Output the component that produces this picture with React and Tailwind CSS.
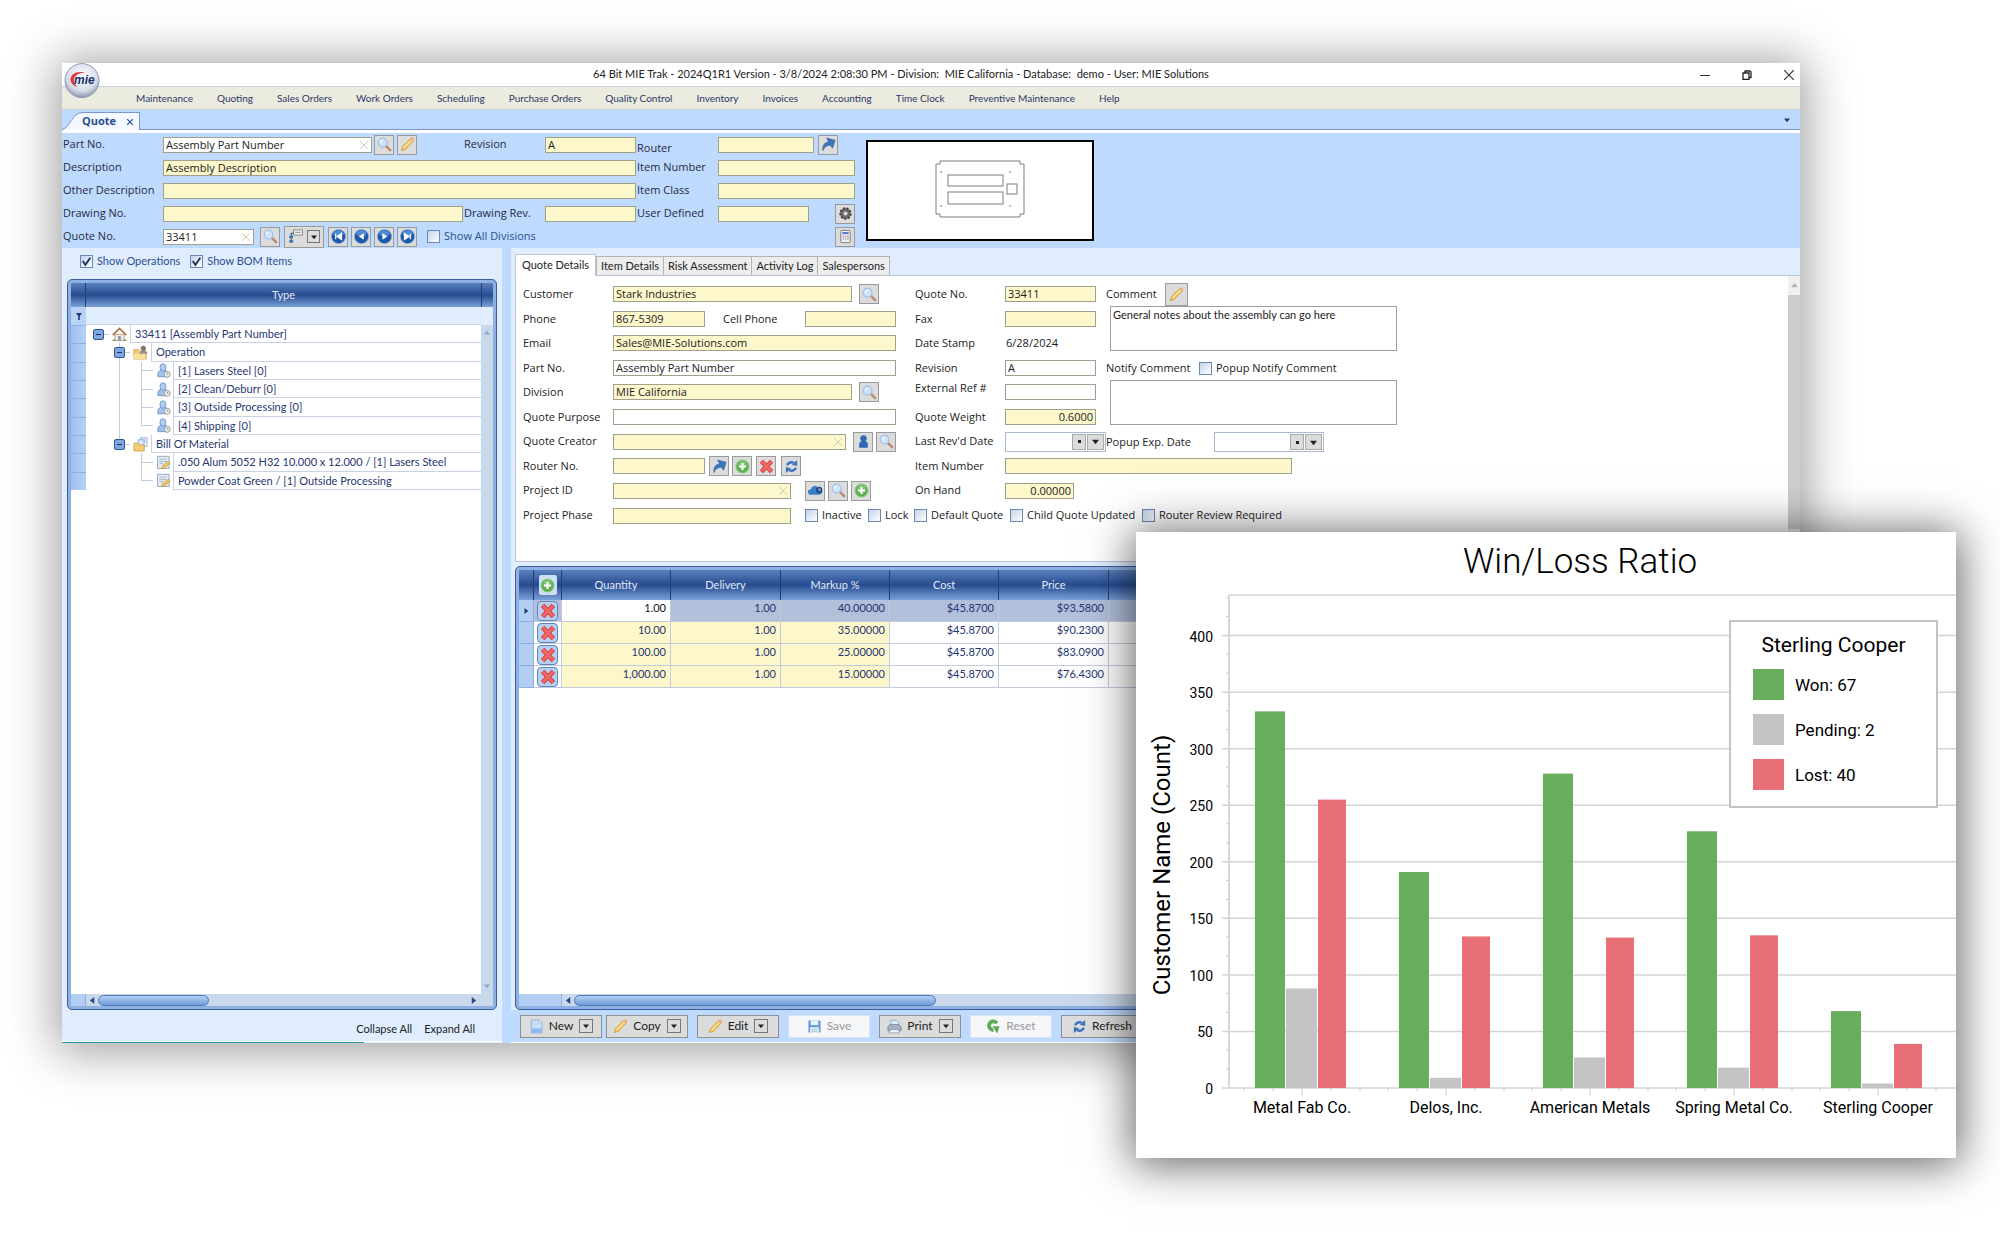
import React, { useState } from "react";
import clsx from "clsx";

const menuItems = [
  "Maintenance",
  "Quoting",
  "Sales Orders",
  "Work Orders",
  "Scheduling",
  "Purchase Orders",
  "Quality Control",
  "Inventory",
  "Invoices",
  "Accounting",
  "Time Clock",
  "Preventive Maintenance",
  "Help",
];

const detailTabs = ["Quote Details", "Item Details", "Risk Assessment", "Activity Log", "Salespersons"];

const treeRows = [
  { level: 1, label: "33411 [Assembly Part Number]", icon: "house" },
  { level: 2, label: "Operation", icon: "folderUser" },
  { level: 3, label: "[1] Lasers Steel [0]", icon: "operation", trunk: true },
  { level: 3, label: "[2] Clean/Deburr [0]", icon: "operation", trunk: true },
  { level: 3, label: "[3] Outside Processing [0]", icon: "operation", trunk: true },
  { level: 3, label: "[4] Shipping [0]", icon: "operation", trunk: true, last: true },
  { level: 2, label: "Bill Of Material", icon: "folderDocs", last: true },
  { level: 3, label: ".050 Alum 5052 H32 10.000 x 12.000 / [1] Lasers Steel", icon: "material" },
  { level: 3, label: "Powder Coat Green / [1] Outside Processing", icon: "material", last: true },
];

const quantities = [
  { quantity: "1.00", delivery: "1.00", markup: "40.00000", cost: "$45.8700", price: "$93.5800" },
  { quantity: "10.00", delivery: "1.00", markup: "35.00000", cost: "$45.8700", price: "$90.2300" },
  { quantity: "100.00", delivery: "1.00", markup: "25.00000", cost: "$45.8700", price: "$83.0900" },
  { quantity: "1,000.00", delivery: "1.00", markup: "15.00000", cost: "$45.8700", price: "$76.4300" },
];

const chartData = [
  { name: "Metal Fab Co.", won: 333, pending: 88, lost: 255 },
  { name: "Delos, Inc.", won: 191, pending: 9, lost: 134 },
  { name: "American Metals", won: 278, pending: 27, lost: 133 },
  { name: "Spring Metal Co.", won: 227, pending: 18, lost: 135 },
  { name: "Sterling Cooper", won: 68, pending: 4, lost: 39 },
];

const legend = [
  { label: "Won: 67", color: "bg-[#69ae5d]" },
  { label: "Pending: 2", color: "bg-[#c3c4c4]" },
  { label: "Lost: 40", color: "bg-[#e76f75]" },
];

// Icons
const shapes = {
  search: (
    <>
      <path d="M9.5 9.5 14 14" stroke="#b98a72" strokeWidth="2.6" strokeLinecap="round" />
      <circle cx="6" cy="6" r="4.6" fill="#cfe4fb" stroke="#a9c4ea" strokeWidth="1.6" />
      <path d="M3.6 6a2.6 2.6 0 0 1 2.6-2.6" stroke="#fff" strokeWidth="1.2" />
    </>
  ),
  pencil: (
    <>
      <path d="M1.5 14.5 2.6 10.4 10.8 2a2 2 0 0 1 2.9 2.8L5.6 13.2Z" fill="#f6c65e" stroke="#c99438" strokeWidth="0.8" />
      <path d="m4 11.8 8-8.2" stroke="#fbe3a2" strokeWidth="1.4" />
      <path d="m10.8 2 2.9 2.8 1-1.2a1.7 1.7 0 0 0-2.6-2.6Z" fill="#e9b48a" />
    </>
  ),
  jump: <path d="M2 14.5C1.5 8.5 4 5.5 8.2 5.3L6 1 15 3.4 12.4 12 9.8 8.8C6 9 4 10.5 2 14.5Z" fill="#3f75bd" stroke="#2d5a9c" strokeWidth="0.6" />,
  add: (
    <>
      <circle cx="8" cy="8" r="7" fill="#5fb052" stroke="#8fce86" strokeWidth="1" />
      <circle cx="8" cy="6" r="4.4" fill="#8bcb7f" opacity="0.7" />
      <path d="M8 4.2v7.6M4.2 8h7.6" stroke="#fff" strokeWidth="2.2" />
    </>
  ),
  remove: (
    <>
      <path d="M2.6 2.4 13.4 13.6M13.4 2.4 2.6 13.6" stroke="#d6373c" strokeWidth="4.8" />
      <path d="M3 2.8 13 13.2M13 2.8 3 13.2" stroke="#f26a66" strokeWidth="3" />
    </>
  ),
  refresh: (
    <>
      <path d="M3.4 6.6C4.4 4 7.4 2.6 10.4 4" stroke="#3a70bd" strokeWidth="2.6" />
      <path d="M14 1v6.4L8.4 6Z" fill="#3a70bd" />
      <path d="M12.6 9.4c-1 2.6-4 4-7 2.6" stroke="#3a70bd" strokeWidth="2.6" />
      <path d="M2 15V8.6L7.6 10Z" fill="#3a70bd" />
    </>
  ),
  user: (
    <>
      <circle cx="8" cy="4.6" r="3.4" fill="#2f68b5" />
      <path d="M3.4 14.6V11C3.4 8.6 5.4 7.2 8 7.2s4.6 1.4 4.6 3.8v3.6Z" fill="#2f68b5" />
    </>
  ),
  cloud: (
    <>
      <path d="M3 12.6a3 3 0 0 1 0-6A4.4 4.4 0 0 1 11 5a3.9 3.9 0 0 1 1.4 7.6Z" fill="#3c7fc9" />
      <path d="M9 3.5h5v5" fill="#a9c9ec" />
      <circle cx="12" cy="7.5" r="2.6" fill="none" stroke="#1c2f55" strokeWidth="1.2" />
    </>
  ),
  gear: (
    <>
      <circle cx="8" cy="8" r="5.6" fill="#6a6a6a" stroke="#444" strokeWidth="2" strokeDasharray="2.4 1.4" />
      <circle cx="8" cy="8" r="2.2" fill="#dcdcdc" />
    </>
  ),
  calculator: (
    <>
      <rect x="3" y="1.5" width="10" height="13" rx="1" fill="#f2f2f2" stroke="#777" />
      <path d="M4.6 4.4h6.8" stroke="#5c83c7" strokeWidth="2.4" />
      <path d="M5 8h1.6M7.4 8H9M9.8 8h1.6M5 10.6h1.6M7.4 10.6H9M9.8 10.6h1.6" stroke="#999" strokeWidth="1.4" />
    </>
  ),
  branch: (
    <>
      <rect x="6" y="1" width="9.4" height="5.4" fill="#f4f4f4" stroke="#777" strokeWidth="0.9" />
      <path d="M8 3.6h5.6" stroke="#666" strokeWidth="1.2" strokeDasharray="1.2 0.8" />
      <path d="M3.4 15V4.6H6" stroke="#2f5f9f" strokeWidth="1.2" />
      <path d="M1.4 8.6h4M1.4 13h4" stroke="#2f77b5" strokeWidth="2.6" />
    </>
  ),
  doc: (
    <>
      <path d="M2.5 1h8l3.4 3.4V15H2.5Z" fill="#c9def8" stroke="#86ace0" strokeWidth="0.9" />
      <path d="M3 10h10.4v4.6H3Z" fill="#8db9ef" />
      <path d="M10.5 1v3.4h3.4Z" fill="#fff" stroke="#86ace0" strokeWidth="0.6" />
    </>
  ),
  floppy: (
    <>
      <rect x="1.5" y="1.5" width="13" height="13" rx="1" fill="#6b9bd4" />
      <rect x="4" y="1.5" width="8" height="5" fill="#e8f1fb" />
      <rect x="3.4" y="9" width="9.2" height="5.5" fill="#fff" />
      <path d="M4.6 11h6.8M4.6 13h6.8" stroke="#7ea6d8" strokeWidth="0.9" />
    </>
  ),
  printer: (
    <>
      <path d="M4.4 1.4h6l2 2V8H4.4Z" fill="#dcebfb" stroke="#7d9cc4" strokeWidth="0.8" />
      <path d="M1 8.4 3.2 6h9.6L15 8.4v4.2H1Z" fill="#a6b4c6" stroke="#66788f" strokeWidth="0.8" />
      <path d="M3.4 11.4h9.2l1 3.4H2.4Z" fill="#f5f8fc" stroke="#7d8ea6" strokeWidth="0.8" />
    </>
  ),
  reset: (
    <>
      <path d="M11.6 4.6A4.6 4.6 0 1 0 8 11.8" stroke="#5aaa58" strokeWidth="4" />
      <path d="M7 7.6h7.4L12 15.4Z" fill="#5aaa58" />
    </>
  ),
  house: (
    <>
      <path d="M3 8h10v6.6H3Z" fill="#f3ead9" stroke="#a48c74" strokeWidth="0.8" />
      <path d="M.8 8.6 8 1.6l7.2 7" stroke="#a9714d" strokeWidth="1.8" />
      <path d="M6.6 9.6h2.8v5H6.6Z" fill="#7c98c0" />
      <path d="M.6 13.2h3v1.6h-3ZM12.4 13.2h3v1.6h-3Z" fill="#6fa84f" />
    </>
  ),
  folderUser: (
    <>
      <path d="M1 5h5l1.4 1.8H14V15H1Z" fill="#f3cd72" stroke="#c79a40" strokeWidth="0.8" />
      <circle cx="11" cy="3.6" r="2.8" fill="#8a7468" />
      <path d="M6.6 9.4c0-2.4 1.8-3.4 4.4-3.4s4.4 1 4.4 3.4Z" fill="#8f8f98" />
      <path d="M1 9.4h12V15H1Z" fill="#fbe09a" />
    </>
  ),
  folderDocs: (
    <>
      <path d="M8 .8h7v9.4H8Z" fill="#f2f7fd" stroke="#7fa0cc" strokeWidth="0.8" />
      <path d="M9.4 3.2h4.2M9.4 5h4.2" stroke="#86a9d6" strokeWidth="0.8" />
      <path d="M5.4 3h6.4v8H5.4Z" fill="#dbe8f7" stroke="#7fa0cc" strokeWidth="0.8" />
      <path d="M1 6.4h3.6L6 8.4h6V15H1Z" fill="#f3cf74" stroke="#c79a40" strokeWidth="0.8" />
    </>
  ),
  operation: (
    <>
      <path d="M2 14.6v-3C2 9 4.2 7.4 7.4 7.4s5.2 1.6 5.2 4.2v3Z" fill="#a3c2eb" stroke="#6c90c6" strokeWidth="0.9" />
      <ellipse cx="7.4" cy="4.8" rx="3.2" ry="4" fill="#b4cef1" stroke="#6c90c6" strokeWidth="0.9" />
      <circle cx="12" cy="12" r="3.2" fill="#eef0e4" stroke="#8c9298" strokeWidth="0.9" />
      <path d="M12 10.4V12h1.4" stroke="#777" strokeWidth="0.8" />
    </>
  ),
  material: (
    <>
      <path d="M1.6 1.4H14v13H1.6Z" fill="#e3ebf4" stroke="#8d9fb6" strokeWidth="0.9" />
      <path d="M3.6 4.4h8M3.6 6.8h8M3.6 9.2h4" stroke="#9db0c9" strokeWidth="0.9" />
      <path d="m6 14.6.8-3 6.4-5 1.8 2-6.2 5.4Z" fill="#f5ca5c" stroke="#b98d33" strokeWidth="0.7" />
    </>
  ),
  first: <path d="M5 5v6M11.2 4.8 6.6 8l4.6 3.2Z" fill="#fff" stroke="#fff" strokeWidth="1.3" />,
  previous: <path d="M10.4 4.6 5.2 8l5.2 3.4Z" fill="#fff" />,
  next: <path d="M5.8 4.6 11 8l-5.2 3.4Z" fill="#fff" />,
  final: <path d="M11 5v6M4.8 4.8 9.4 8l-4.6 3.2Z" fill="#fff" stroke="#fff" strokeWidth="1.3" />,
};

const Icon = ({ name, className = "size-4" }) => (
  <svg viewBox="0 0 16 16" fill="none" className={clsx("shrink-0", className)} aria-hidden="true">
    {["first", "previous", "next", "final"].includes(name) && (
      <>
        <circle cx="8" cy="8" r="7.6" fill="#1e58a6" stroke="#8fb3dd" strokeWidth="0.8" />
        <ellipse cx="8" cy="4.8" rx="5.4" ry="3.4" fill="#4f8ed4" />
      </>
    )}
    {shapes[name]}
  </svg>
);

const Caret = ({ dir = "down", className = "size-[7px] text-[#222]" }) => (
  <svg viewBox="0 0 8 8" className={clsx("shrink-0", className)} fill="currentColor" aria-hidden="true">
    {dir === "down" && <path d="M0 2h8L4 7Z" />}
    {dir === "up" && <path d="M0 6h8L4 1Z" />}
    {dir === "left" && <path d="M6 0v8L1 4Z" />}
    {dir === "right" && <path d="M2 0v8l5-4Z" />}
  </svg>
);

// Form controls
const IconButton = ({ icon, label, className = "" }) => (
  <button
    type="button"
    aria-label={label}
    className={clsx("flex size-5 shrink-0 items-center justify-center border border-[#9a9a9a] bg-[#dcdcdc]", className)}
  >
    <Icon name={icon} className="size-[15px]" />
  </button>
);

const Field = ({ id, value = "", white, clearable, right, className = "", label }) => (
  <span className={clsx("relative flex shrink-0", className)}>
    <input
      id={id}
      aria-label={label}
      defaultValue={value}
      className={clsx(
        "h-4 w-full min-w-0 border border-[#a0a08c] px-[2px] text-[11px] leading-4 text-[#222] outline-none",
        white ? "bg-white" : "bg-[#fdf8cc]",
        right && "text-right"
      )}
    />
    {clearable && (
      <svg viewBox="0 0 8 8" className="absolute right-1 top-1 size-2" stroke="#cfcbb8" aria-hidden="true">
        <path d="m0 0 8 8M8 0 0 8" />
      </svg>
    )}
  </span>
);

const CheckBox = ({ label, checked, className = "" }) => (
  <label className={clsx("flex shrink-0 items-center gap-1 whitespace-nowrap", className)}>
    <span className="relative flex">
      <input
        type="checkbox"
        defaultChecked={checked}
        className="peer size-[13px] appearance-none border border-[#6b87b4] bg-linear-to-br from-[#c3d3ea] to-white"
      />
      <svg
        viewBox="0 0 12 12"
        fill="none"
        stroke="#24355c"
        strokeWidth="1.8"
        className="pointer-events-none absolute left-0 top-0 hidden size-[13px] peer-checked:block"
        aria-hidden="true"
      >
        <path d="M2.5 5.5 5 9l4.5-6.5" />
      </svg>
    </span>
    {label}
  </label>
);

const Row = ({ id, label, top, children }) => (
  <div className="flex items-center">
    <label htmlFor={id} className={clsx("w-[90px] shrink-0 whitespace-nowrap", top && "self-start")}>
      {label}
    </label>
    {children}
  </div>
);

const HeadRow = ({ id, label, width, low, children }) => (
  <div className="flex h-[23px] items-center">
    <label htmlFor={id} className={clsx("shrink-0 whitespace-nowrap", width, low && "self-end")}>
      {label}
    </label>
    {children}
  </div>
);

const DateField = ({ id, className }) => (
  <span className={clsx("flex h-5 shrink-0 items-stretch gap-px border border-[#a9b9d6] bg-white p-px", className)}>
    <input id={id} defaultValue="" className="w-0 min-w-0 flex-1 text-[11px] outline-none" />
    <button type="button" aria-label="Pick a day" className="flex w-[14px] items-center justify-center border border-[#aaa] bg-[#dcdcdc]">
      <span className="size-[3px] bg-[#222]" />
    </button>
    <button type="button" aria-label="Open calendar" className="flex w-[17px] items-center justify-center border border-[#aaa] bg-[#dcdcdc]">
      <Caret />
    </button>
  </span>
);

const Logo = () => (
  <svg viewBox="0 0 36 36" className="absolute left-[2px] top-0 size-9" aria-label="mie">
    <defs>
      <radialGradient id="disc" cx="50%" cy="35%" r="65%">
        <stop offset="0" stopColor="#fdfeff" />
        <stop offset="0.7" stopColor="#d5dce8" />
        <stop offset="1" stopColor="#8b97ae" />
      </radialGradient>
    </defs>
    <circle cx="18" cy="17.6" r="17" fill="url(#disc)" stroke="#8f9bb2" strokeWidth="1" />
    <path d="M21 9.4C12 7.8 6.6 11.6 6.6 16.4c0 3.6 2.6 6.2 6.6 7.4-2.4-1.8-3.6-4-3.4-7 .2-4 4.4-7 11.2-7.4Z" fill="#e0303a" />
    <text x="10" y="21" fontFamily="Liberation Sans, sans-serif" fontWeight="bold" fontStyle="italic" fontSize="12" fill="#1d2f66">
      mie
    </text>
  </svg>
);

const TitleBar = () => (
  <header className="relative font-[Lato,sans-serif]">
    <div className="flex h-[23px] items-center bg-white">
      <span className="w-[120px] shrink-0" />
      <h1 className="flex-1 whitespace-nowrap text-center text-[11px] text-[#222]">
        64 Bit MIE Trak - 2024Q1R1 Version - 3/8/2024 2:08:30 PM - Division:&nbsp; MIE California - Database:&nbsp; demo - User: MIE Solutions
      </h1>
      <div className="mr-[5px] flex w-[175px] shrink-0 items-center justify-end gap-[30px]">
        <button type="button" aria-label="Minimize" className="p-px">
          <svg viewBox="0 0 10 10" className="size-[10px]" stroke="#333"><path d="M0 5.5h10" /></svg>
        </button>
        <button type="button" aria-label="Restore" className="p-px">
          <svg viewBox="0 0 10 10" className="size-[10px]" stroke="#222" fill="none" strokeWidth="1.3">
            <path d="M1 3h6v6.4H1ZM3 3V1h4.4A1.6 1.6 0 0 1 9 2.6V7.5H7" />
          </svg>
        </button>
        <button type="button" aria-label="Close" className="p-px">
          <svg viewBox="0 0 10 10" className="size-[10px]" stroke="#333" strokeWidth="1.2"><path d="m0 0 10 10M10 0 0 10" /></svg>
        </button>
      </div>
    </div>
    <nav className="flex h-6 items-center gap-6 border-y border-[#c3d0e4] bg-[#ecebe0] pl-[74px] pt-px text-[10px] text-[#2b3767]">
      {menuItems.map((item) => (
        <button key={item} type="button" className="whitespace-nowrap">
          {item}
        </button>
      ))}
    </nav>
    <Logo />
  </header>
);

const DocumentTabs = () => (
  <div className="flex h-[23px] items-end justify-between border-b-[3px] border-white bg-[#bfdaff]">
    <div className="flex h-full flex-1 items-end border-b border-[#7a95cf]">
      <svg viewBox="0 0 20 18" className="-mb-px h-[18px] w-5" aria-hidden="true">
        <path d="M0 18C8 16 10 1 20 1v17Z" fill="#f4f9ff" />
        <path d="M0 17.5C8 16 10 1 20 .5" fill="none" stroke="#7a95cf" />
      </svg>
      <div className="-mb-px flex h-[18px] items-center gap-[11px] border-r border-t border-[#7a95cf] bg-[#f4f9ff] pr-[6px] text-[#2b4c8f]">
        <button type="button" className="text-[11px] font-bold">Quote</button>
        <button type="button" aria-label="Close tab">
          <svg viewBox="0 0 6 6" className="size-[6px]" stroke="#2b4c8f" strokeWidth="1.2"><path d="m0 0 6 6M6 0 0 6" /></svg>
        </button>
      </div>
      <button type="button" aria-label="Tab list" className="mb-[6px] ml-auto mr-[10px]">
        <Caret className="size-[6px] text-[#1f3a73]" />
      </button>
    </div>
  </div>
);

const PartPreview = () => (
  <div className="ml-[11px] mt-[7px] flex h-[101px] w-[228px] shrink-0 items-center justify-center border-2 border-black bg-white">
    <svg viewBox="0 0 90 58" className="-mt-1 h-[58px] w-[90px]" fill="none" stroke="#7d7d7d" aria-label="Part drawing">
      <path d="M5 1h80v3h4v50h-4v3H5v-3H1V4h4Z" />
      <rect x="13" y="15" width="55" height="11" />
      <rect x="13" y="32" width="55" height="12" />
      <rect x="72" y="24" width="10" height="10" />
      <path d="M5 12h2M74 12h2M5 46h2M74 46h2" />
    </svg>
  </div>
);

const PartHeader = () => (
  <section className="flex bg-[#bfdaff] pl-px text-[11px] text-[#1f2a3f]">
    <div className="w-[573px] shrink-0">
      <HeadRow id="part" label="Part No." width="w-[100px]">
        <Field id="part" value="Assembly Part Number" white clearable className="w-[209px]" />
        <IconButton icon="search" label="Find part" className="ml-[2px]" />
        <IconButton icon="pencil" label="Edit part" className="ml-[3px]" />
        <label htmlFor="rev" className="ml-[47px] w-[81px]">Revision</label>
        <Field id="rev" value="A" className="w-[91px]" />
      </HeadRow>
      <HeadRow id="desc" label="Description" width="w-[100px]">
        <Field id="desc" value="Assembly Description" className="w-[473px]" />
      </HeadRow>
      <HeadRow id="other" label="Other Description" width="w-[100px]">
        <Field id="other" className="w-[473px]" />
      </HeadRow>
      <HeadRow id="drawing" label="Drawing No." width="w-[100px]">
        <Field id="drawing" className="w-[300px]" />
        <label htmlFor="drawingRev" className="ml-px w-[81px]">Drawing Rev.</label>
        <Field id="drawingRev" className="w-[91px]" />
      </HeadRow>
      <HeadRow id="quote" label="Quote No." width="w-[100px]">
        <Field id="quote" value="33411" white clearable className="w-[91px]" />
        <IconButton icon="search" label="Find quote" className="ml-[6px]" />
        <div className="ml-1 flex h-[22px] w-10 items-center justify-between border border-[#9a9a9a] bg-[#dcdcdc] px-[3px]">
          <button type="button" aria-label="Quote tree"><Icon name="branch" className="size-[15px]" /></button>
          <button type="button" aria-label="More" className="flex size-[13px] items-center justify-center border border-[#777]">
            <Caret className="size-[6px] text-[#222]" />
          </button>
        </div>
        <div className="ml-1 flex gap-[3px]">
          <IconButton icon="first" label="First" />
          <IconButton icon="previous" label="Previous" />
          <IconButton icon="next" label="Next" />
          <IconButton icon="final" label="Last" />
        </div>
        <CheckBox label="Show All Divisions" className="ml-[10px] text-[#2c4f8f]" />
      </HeadRow>
    </div>
    <div className="ml-px w-[218px] shrink-0">
      <HeadRow id="router" label="Router" width="w-[81px]" low>
        <Field id="router" className="w-24" />
        <IconButton icon="jump" label="Open router" className="ml-1" />
      </HeadRow>
      <HeadRow id="itemNo" label="Item Number" width="w-[81px]">
        <Field id="itemNo" className="w-[137px]" />
      </HeadRow>
      <HeadRow id="itemClass" label="Item Class" width="w-[81px]">
        <Field id="itemClass" className="w-[137px]" />
      </HeadRow>
      <HeadRow id="userDef" label="User Defined" width="w-[81px]">
        <Field id="userDef" className="w-[91px]" />
        <IconButton icon="gear" label="Settings" className="ml-auto" />
      </HeadRow>
      <div className="flex h-[23px] items-center justify-end">
        <IconButton icon="calculator" label="Calculator" />
      </div>
    </div>
    <PartPreview />
  </section>
);

const Collapse = () => (
  <button
    type="button"
    aria-label="Collapse"
    className="flex size-[11px] shrink-0 items-center justify-center rounded-[2px] border border-[#2f5596] bg-[#7fa6df]"
  >
    <span className="h-px w-[5px] bg-[#16305f]" />
  </button>
);

const TreeRow = ({ row }) => (
  <li className="flex flex-1 items-center">
    {row.level === 1 && (
      <>
        <span className="w-[7px]" />
        <Collapse />
        <span className="h-px w-[5px] bg-[#c3cde0]" />
        <Icon name={row.icon} className="ml-[3px] mr-[3px] size-[15px]" />
      </>
    )}
    {row.level === 2 && (
      <>
        <span className="w-7" />
        <span className="flex flex-col items-center self-stretch">
          <span className="w-px flex-1 bg-[#c3cde0]" />
          <Collapse />
          <span className={clsx("w-px flex-1", !row.last && "bg-[#c3cde0]")} />
        </span>
        <span className="h-px w-[5px] bg-[#c3cde0]" />
        <Icon name={row.icon} className="ml-[3px] mr-[3px] size-[15px]" />
      </>
    )}
    {row.level === 3 && (
      <>
        <span className={clsx("w-[34px] self-stretch border-r", row.trunk ? "border-[#c3cde0]" : "border-transparent")} />
        <span className={clsx("w-[22px] border-r border-[#c3cde0]", row.last ? "h-1/2 self-start" : "self-stretch")} />
        <span className="h-px w-[11px] bg-[#c3cde0]" />
        <Icon name={row.icon} className="ml-[3px] mr-[2px] size-[15px]" />
      </>
    )}
    <span className="flex-1 self-stretch whitespace-nowrap border-b border-l border-[#c9d2e2] pl-1 leading-[17px] text-[#263670]">{row.label}</span>
  </li>
);

const BottomScroll = ({ gutter, thumb, right }) => (
  <div className="flex h-3 items-center bg-[#c9d8ea]">
    <span className={clsx("h-full border-r border-[#8fb0e0] bg-[#b4cdf2]", gutter)} />
    <Caret dir="left" className="ml-[3px] mr-[2px] size-[7px] text-[#274a86]" />
    <span className={clsx("h-[11px] rounded-full border border-[#4f76b5] bg-linear-to-b from-[#b5d0f5] to-[#6f9bd8]", thumb)} />
    {right && <Caret dir="right" className="ml-auto mr-4 size-[7px] text-[#274a86]" />}
  </div>
);

const TreePanel = () => (
  <aside className="flex w-[440px] shrink-0 flex-col bg-[#e0edff] font-[Lato,sans-serif] text-[11px]">
    <div className="flex h-[27px] items-center gap-[10px] pl-[18px] text-[#2c4f8f]">
      <CheckBox label="Show Operations" checked />
      <CheckBox label="Show BOM Items" checked />
    </div>
    <div className="ml-[5px] mr-[5px] mt-1 flex min-h-0 flex-1 flex-col rounded-[5px] border border-[#3d5d9a] bg-[#8fb0e2] p-[3px]">
      <div className="flex h-6 shrink-0 bg-[linear-gradient(#5b82be,#274b8f_50%,#7ba1d8)] text-[#e3ecfa]">
        <span className="w-[15px] border-r border-[#1d3d7c]" />
        <span className="flex flex-1 items-center justify-center">Type</span>
        <span className="w-3 border-l border-[#1d3d7c]" />
      </div>
      <div className="flex min-h-0 flex-1 bg-white">
        <div className="w-[15px] shrink-0">
          <div className="flex h-[18px] items-center justify-center bg-[#b9d2f6] text-[#1f3a73]">
            <svg viewBox="0 0 6 7" className="h-[7px] w-[6px]" fill="currentColor" aria-label="Filter"><path d="M0 0h6L3.8 3v4H2.2V3Z" /></svg>
          </div>
          <div className="flex h-[165px] flex-col">
            {treeRows.map((row) => (
              <span key={row.label} className="flex-1 border-t border-[#8fb0e0] bg-linear-to-r from-[#9dbff0] to-[#b7d0f5]" />
            ))}
          </div>
        </div>
        <div className="min-w-0 flex-1">
          <div className="h-[18px] border-b border-[#c9d2e2] bg-[#e0edff]" />
          <ul className="flex h-[165px] flex-col">
            {treeRows.map((row) => (
              <TreeRow key={row.label} row={row} />
            ))}
          </ul>
        </div>
        <div className="flex w-3 shrink-0 flex-col">
          <span className="h-[18px] bg-[#e0edff]" />
          <span className="flex flex-1 flex-col items-center justify-between bg-[#c9d8ea] py-[5px]">
            <Caret dir="up" className="size-[6px] text-[#8ea6c8]" />
            <Caret className="size-[6px] text-[#8ea6c8]" />
          </span>
        </div>
      </div>
      <BottomScroll gutter="w-[15px]" thumb="w-[111px]" right />
    </div>
    <div className="flex h-[32px] items-center justify-end gap-3 border-b border-white pr-[27px] pt-2 text-[#222]">
      <button type="button">Collapse All</button>
      <button type="button">Expand All</button>
    </div>
    <div className="h-px w-[302px] bg-[#2f93ad]" />
  </aside>
);

const QuoteForm = () => (
  <div className="pl-[7px] pt-[6px]">
    <div className="flex h-[221px]">
      <div className="grid w-[392px] shrink-0 grid-rows-9">
        <Row id="customer" label="Customer">
          <Field id="customer" value="Stark Industries" className="w-[239px]" />
          <IconButton icon="search" label="Find customer" className="ml-[7px]" />
        </Row>
        <Row id="phone" label="Phone">
          <Field id="phone" value="867-5309" className="w-[92px]" />
          <label htmlFor="cell" className="ml-[18px] w-[82px]">Cell Phone</label>
          <Field id="cell" className="w-[91px]" />
        </Row>
        <Row id="email" label="Email">
          <Field id="email" value="Sales@MIE-Solutions.com" className="w-[283px]" />
        </Row>
        <Row id="partNo" label="Part No.">
          <Field id="partNo" value="Assembly Part Number" white className="w-[283px]" />
        </Row>
        <Row id="division" label="Division">
          <Field id="division" value="MIE California" className="w-[239px]" />
          <IconButton icon="search" label="Find division" className="ml-[7px]" />
        </Row>
        <Row id="purpose" label="Quote Purpose">
          <Field id="purpose" white className="w-[283px]" />
        </Row>
        <Row id="creator" label="Quote Creator">
          <Field id="creator" clearable className="w-[233px]" />
          <IconButton icon="user" label="Me" className="ml-[7px]" />
          <IconButton icon="search" label="Find creator" className="ml-[3px]" />
        </Row>
        <Row id="routerNo" label="Router No.">
          <Field id="routerNo" className="w-[92px]" />
          <IconButton icon="jump" label="Open router" className="ml-1" />
          <IconButton icon="add" label="Add router" className="ml-[3px]" />
          <IconButton icon="remove" label="Remove router" className="ml-1" />
          <IconButton icon="refresh" label="Reload router" className="ml-[5px]" />
        </Row>
        <Row id="project" label="Project ID">
          <Field id="project" clearable className="w-[178px]" />
          <IconButton icon="cloud" label="Project files" className="ml-[14px]" />
          <IconButton icon="search" label="Find project" className="ml-[3px]" />
          <IconButton icon="add" label="Add project" className="ml-[3px]" />
        </Row>
      </div>

      <div className="grid w-[191px] shrink-0 grid-rows-9">
        <Row id="quoteNo" label="Quote No.">
          <Field id="quoteNo" value="33411" className="w-[91px]" />
        </Row>
        <Row id="fax" label="Fax">
          <Field id="fax" className="w-[91px]" />
        </Row>
        <div className="flex items-center">
          <span className="w-[91px]">Date Stamp</span>
          <span>6/28/2024</span>
        </div>
        <Row id="revision" label="Revision">
          <Field id="revision" value="A" white className="w-[91px]" />
        </Row>
        <Row id="extRef" label="External Ref #" top>
          <Field id="extRef" white className="w-[91px]" />
        </Row>
        <Row id="weight" label="Quote Weight">
          <Field id="weight" value="0.6000" right className="w-[91px]" />
        </Row>
        <Row id="lastRev" label="Last Rev'd Date">
          <DateField id="lastRev" className="w-[101px]" />
        </Row>
        <Row id="itemNumber" label="Item Number">
          <Field id="itemNumber" className="w-[287px]" />
        </Row>
        <Row id="onHand" label="On Hand">
          <Field id="onHand" value="0.00000" right className="w-[69px]" />
        </Row>
      </div>

      <div className="w-[291px] shrink-0">
        <div className="flex h-6 items-center">
          <label htmlFor="comment" className="w-[59px]">Comment</label>
          <IconButton icon="pencil" label="Edit comment" className="size-[23px]" />
        </div>
        <textarea
          id="comment"
          defaultValue="General notes about the assembly can go here"
          className="ml-1 block h-[45px] w-[287px] resize-none border border-[#a0a0a0] px-[2px] font-[Lato,sans-serif] text-[11px] outline-none"
        />
        <div className="flex h-[29px] items-center pt-[6px]">
          <label htmlFor="notify" className="w-[93px]">Notify Comment</label>
          <CheckBox label="Popup Notify Comment" />
        </div>
        <textarea
          id="notify"
          defaultValue=""
          className="ml-1 block h-[45px] w-[287px] resize-none border border-[#a0a0a0] px-[2px] text-[11px] outline-none"
        />
        <div className="mt-[5px] flex h-6 items-center">
          <label htmlFor="popupDate" className="w-[108px]">Popup Exp. Date</label>
          <DateField id="popupDate" className="w-[110px]" />
        </div>
      </div>
    </div>
    <div className="flex h-[25px] items-center">
      <label htmlFor="phase" className="w-[90px]">Project Phase</label>
      <Field id="phase" className="w-[178px]" />
      <div className="ml-[14px] flex items-center">
        <CheckBox label="Inactive" className="w-[63px]" />
        <CheckBox label="Lock" className="w-[46px]" />
        <CheckBox label="Default Quote" className="w-[96px]" />
        <CheckBox label="Child Quote Updated" className="w-[132px]" />
        <CheckBox label="Router Review Required" />
      </div>
    </div>
  </div>
);

const QuoteTabs = () => {
  const [active, setActive] = useState("Quote Details");

  return (
    <div className="flex items-end pt-[6px] font-[Lato,sans-serif] text-[11px] text-[#222]">
      {detailTabs.map((tab) => (
        <button
          key={tab}
          type="button"
          onClick={() => setActive(tab)}
          className={clsx(
            "whitespace-nowrap border-x border-t",
            active === tab ? "z-10 -mb-px h-[22px] border-[#c0c4cc] bg-white px-[6px]" : "-mr-px h-[19px] border-[#b4b4b4] bg-[#ededed] px-1"
          )}
        >
          {tab}
        </button>
      ))}
    </div>
  );
};

const cell = "h-[22px] border-b border-r border-[#c3cbdd] pr-1 pb-1 text-right";

const QuantityGrid = () => (
  <div className="mt-1 flex min-h-0 flex-1 flex-col overflow-hidden rounded-tl-[5px] rounded-bl-[5px] border border-[#3d5d9a] bg-[#8fb0e2] p-[3px] font-[Lato,sans-serif]">
    <div className="min-h-0 flex-1 bg-white">
      <table className="w-full table-fixed border-separate border-spacing-0 text-[11px] text-[#263670]">
        <colgroup>
          <col className="w-[15px]" />
          <col className="w-7" />
          <col className="w-[109px]" />
          <col className="w-[110px]" />
          <col className="w-[109px]" />
          <col className="w-[109px]" />
          <col className="w-[110px]" />
          <col />
        </colgroup>
        <thead>
          <tr className="h-[30px] bg-[linear-gradient(#5b82be,#274b8f_50%,#7ba1d8)] text-[#e3ecfa]">
            <th className="border-r border-[#1d3d7c]" />
            <th className="border-r border-[#1d3d7c]">
              <button type="button" aria-label="Add quantity" className="mx-auto flex h-5 w-[18px] items-center justify-center rounded-[2px] bg-[#cfe0f5]">
                <Icon name="add" className="size-[15px]" />
              </button>
            </th>
            {["Quantity", "Delivery", "Markup %", "Cost", "Price", ""].map((title) => (
              <th key={title} className="border-r border-[#1d3d7c] font-normal">{title}</th>
            ))}
          </tr>
        </thead>
        <tbody>
          {quantities.map((q, i) => (
            <tr key={q.quantity} className={clsx(i === 0 && "bg-[#b2c0dc]")}>
              <td className="border-b border-r border-[#8fb0e0] bg-[#b4cdf2]">
                {i === 0 && <Caret dir="right" className="mx-auto size-[6px] text-[#1f3a73]" />}
              </td>
              <td className="border-b border-r border-[#c3cbdd]">
                <button
                  type="button"
                  aria-label={`Delete quantity ${q.quantity}`}
                  className="mx-auto flex h-5 w-[21px] items-center justify-center rounded-[4px] border border-[#5d86bf] bg-[#b7d0f0]"
                >
                  <Icon name="remove" className="size-4" />
                </button>
              </td>
              <td className={clsx(cell, i === 0 ? "bg-white text-[#111]" : "bg-[#fdf8cc]")}>{q.quantity}</td>
              <td className={clsx(cell, i > 0 && "bg-[#fdf8cc]")}>{q.delivery}</td>
              <td className={clsx(cell, i > 0 && "bg-[#fdf8cc]")}>{q.markup}</td>
              <td className={cell}>{q.cost}</td>
              <td className={cell}>{q.price}</td>
              <td className={cell} />
            </tr>
          ))}
        </tbody>
      </table>
    </div>
    <BottomScroll gutter="w-[43px]" thumb="w-[362px]" />
  </div>
);

const ToolButton = ({ icon, label, menu, disabled, className = "" }) => (
  <div
    className={clsx(
      "flex h-[23px] w-[82px] shrink-0 items-center justify-center gap-[6px] border",
      disabled ? "border-[#dde3ec] bg-[#f5f7f9] text-[#9a9a9a]" : "border-[#8f8f8f] bg-[#dcdcdc] text-[#222]",
      className
    )}
  >
    <button type="button" disabled={disabled} className="flex items-center gap-[5px]">
      <Icon name={icon} className="size-[15px]" />
      {label}
    </button>
    {menu && (
      <button type="button" aria-label={`${label} options`} className="flex size-[14px] items-center justify-center border border-[#777]">
        <Caret className="size-[6px] text-[#222]" />
      </button>
    )}
  </div>
);

const QuotePanel = () => (
  <section className="flex min-w-0 flex-1 flex-col">
    <div className="flex min-h-0 flex-1 flex-col bg-[#e0edff] pl-1">
      <QuoteTabs />
      <div className="flex h-[287px] shrink-0 border-y border-l border-[#b9c3d6] bg-white text-[11px] text-[#222]">
        <div className="min-w-0 flex-1">
          <QuoteForm />
        </div>
        <div className="flex w-3 flex-col items-center bg-[#f0f0f0]">
          <Caret dir="up" className="my-[6px] size-[7px] text-[#b5b5b5]" />
          <span className="mb-8 w-full flex-1 bg-[#cdcdcd]" />
        </div>
      </div>
      <QuantityGrid />
    </div>
    <div className="flex h-[33px] items-center gap-[9px] overflow-hidden border-b border-white bg-[#bfdaff] pl-[9px] font-[Lato,sans-serif] text-[12px]">
      <ToolButton icon="doc" label="New" menu />
      <ToolButton icon="pencil" label="Copy" menu className="-ml-[5px]" />
      <ToolButton icon="pencil" label="Edit" menu />
      <ToolButton icon="floppy" label="Save" disabled />
      <ToolButton icon="printer" label="Print" menu />
      <ToolButton icon="reset" label="Reset" disabled />
      <ToolButton icon="refresh" label="Refresh" />
    </div>
  </section>
);

// Chart geometry, in the drawing's own units
const baseY = 490;
const perUnit = 1.131;
const axisX = 92;

const WinLossChart = () => (
  <section className="absolute bottom-[75px] right-11 w-[41%] bg-white shadow-[0_3px_42px_4px_rgba(0,0,0,0.6)] font-[Roboto,sans-serif] text-black">
    <h2 className="pl-[68px] pt-2 text-center text-[35px] font-light leading-[44px]">Win/Loss Ratio</h2>
    <svg viewBox="0 0 820 574" className="block w-full" role="img" aria-label="Win/Loss Ratio by customer">
      <g transform="translate(1 14)">
        <path d={`M${axisX} -3V${baseY}`} stroke="#c9cacc" strokeWidth="1.5" />
        <path d={`M${axisX} -3H820`} stroke="#d3d4d6" strokeWidth="1.5" />
        {[0, 50, 100, 150, 200, 250, 300, 350, 400].map((v) => {
          const y = baseY - v * perUnit;
          return (
            <g key={v}>
              <path d={`M${axisX - 7} ${y}H820`} stroke="#d3d4d6" strokeWidth="1.5" />
              <path d={`M${axisX - 3} ${y - 19}h3M${axisX - 3} ${y - 38}h3`} stroke="#c9cacc" />
              <text x={axisX - 16} y={y + 6} textAnchor="end" fontSize="14">{v}</text>
            </g>
          );
        })}
        {chartData.map((d, i) => {
          const mid = 165 + i * 144;
          return (
            <g key={d.name}>
              <rect x={mid - 47} y={baseY - d.won * perUnit} width="30" height={d.won * perUnit} fill="#69ae5d" />
              <rect x={mid - 16} y={baseY - d.pending * perUnit} width="31" height={d.pending * perUnit} fill="#c3c4c4" />
              <rect x={mid + 16} y={baseY - d.lost * perUnit} width="28" height={d.lost * perUnit} fill="#e76f75" />
              <path d={`M${mid} ${baseY}v7M${mid - 58} ${baseY}v3M${mid + 58} ${baseY}v3M${mid - 29} ${baseY}v3M${mid + 29} ${baseY}v3`} stroke="#c9cacc" />
              <text x={mid} y={baseY + 25} textAnchor="middle" fontSize="16">{d.name}</text>
            </g>
          );
        })}
        <text transform="translate(33 267) rotate(-90)" textAnchor="middle" fontSize="24">Customer Name (Count)</text>
      </g>
    </svg>
    <div className="absolute right-[18px] top-[88px] w-[209px] border-2 border-[#c3c4c6] bg-white px-[22px] pb-4 pt-[9px]">
      <h3 className="text-center text-[21px] leading-7">Sterling Cooper</h3>
      <ul className="mt-[10px] flex flex-col gap-[14px]">
        {legend.map((entry) => (
          <li key={entry.label} className="flex items-center gap-[11px] text-[17px] leading-5">
            <span className={clsx("size-[31px]", entry.color)} />
            {entry.label}
          </li>
        ))}
      </ul>
    </div>
  </section>
);

export default function App() {
  return (
    <div className="relative flex h-screen min-h-[900px] w-full flex-col overflow-hidden bg-white pb-[190px] pl-[62px] pr-[200px] pt-[63px] font-['Open_Sans','Noto_Sans',sans-serif]">
      <main className="flex min-h-0 flex-1 flex-col bg-[#bfdaff] shadow-[0_3px_45px_6px_rgba(0,0,0,0.38)]">
        <TitleBar />
        <DocumentTabs />
        <PartHeader />
        <div className="flex min-h-0 flex-1 gap-[9px]">
          <TreePanel />
          <QuotePanel />
        </div>
      </main>
      <WinLossChart />
    </div>
  );
}
